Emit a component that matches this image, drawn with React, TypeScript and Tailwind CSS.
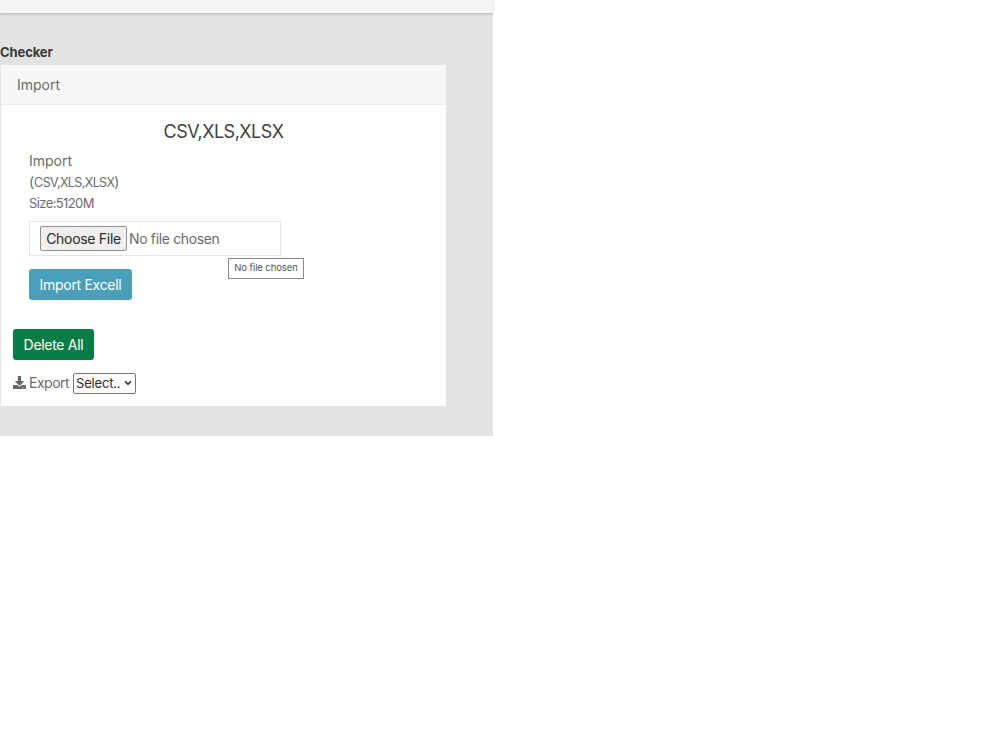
import { ChevronDown } from 'lucide-react'
import { FaDownload } from 'react-icons/fa'

const bodyFont = "font-['Inter','Liberation_Sans',sans-serif]"

export default function App() {
  return (
    <div className={`min-h-[750px] bg-white text-[#6b6b6b] ${bodyFont}`}>
      <div className="flex h-[436px] w-[493px] flex-col bg-[#e3e3e3]">
        <div className="h-[13px] w-full bg-[#f5f5f5] shadow-[0_1px_3px_rgba(0,0,0,0.2)]" />

        <h6 className="mt-[32px] h-[14px] text-[13px] font-bold leading-[14px] tracking-[-0.1px] text-[#3a3a3a]">
          Checker
        </h6>

        <div className="ml-px mt-[6px] h-[341px] w-[445px] bg-white">
          <div className="flex h-[40px] items-center border-b border-[#ececec] bg-[#f7f7f7] pl-4 text-[14px]">
            Import
          </div>

          <div className="px-3">
            <h4 className="mt-[15px] h-[24px] text-center text-[18px] leading-[24px] tracking-[-0.5px] text-[#3f3f3f]">
              CSV,XLS,XLSX
            </h4>

            <div className="ml-4 mt-[6px] text-[14px] leading-[21px]">
              <div>Import</div>
              <div>
                (<span className="text-[12.5px] tracking-[-0.6px]">CSV,XLS,XLSX</span>)
              </div>
              <div className="text-[13px] tracking-[-0.6px]">Size:5120M</div>
            </div>

            <div className="relative ml-4 mt-[7px] flex h-[35px] w-[252px] items-center border border-[#e6e6e6] pl-[10px] text-[14px]">
              <button
                type="button"
                className="h-[25px] w-[87px] rounded-[2px] border border-[#8f8f8f] bg-[#efefef] text-center text-[14px] tracking-[-0.3px] text-[#2b2b2b]"
              >
                Choose File
              </button>
              <span className="ml-[2px] tracking-[-0.35px]">No file chosen</span>
              <div className="absolute left-[198px] top-[36px] flex h-[21px] w-[76px] items-center justify-center border border-[#8a8a8a] bg-white text-[9.5px] tracking-[-0.1px] text-[#555555]">
                No file chosen
              </div>
            </div>

            <button
              type="button"
              className="ml-4 mt-[13px] block h-[31px] w-[103px] rounded-[3px] bg-[#4aa0bb] text-[14px] tracking-[-0.3px] text-white"
            >
              Import Excell
            </button>

            <button
              type="button"
              className="mt-[29px] block h-[31px] w-[81px] rounded-[3px] bg-[#077d45] text-[14px] tracking-[-0.3px] text-white"
            >
              Delete All
            </button>

            <div className="mt-[12px] flex h-[21px] items-center text-[14px]">
              <FaDownload size={13} className="text-[#666666]" />
              <span className="ml-[3px] tracking-[-0.5px]">Export</span>
              <div className="relative ml-[4px] h-[21px] w-[63px]">
                <select className="h-[21px] w-[63px] appearance-none rounded-[2px] border border-[#777777] bg-white pl-[2px] text-[13px] tracking-[-0.2px] text-[#2b2b2b]">
                  <option>Select..</option>
                </select>
                <ChevronDown size={10} strokeWidth={4} className="absolute right-[3px] top-[6px] text-[#2b2b2b]" />
              </div>
            </div>
          </div>
        </div>
      </div>
    </div>
  )
}
